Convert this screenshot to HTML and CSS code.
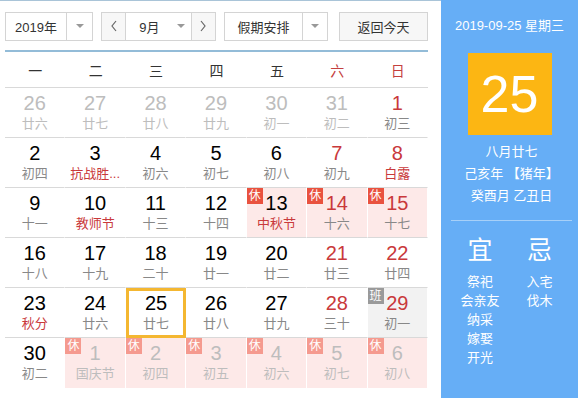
FILE: index.html
```html
<!DOCTYPE html>
<html lang="zh-CN">
<head>
    <meta charset="UTF-8">
    <title>万年历</title>
    <link rel="stylesheet" href="styles.css">
</head>
<body>
    <div class="calendar">
        <div class="main">
            <div class="toolbar">
                <div class="select year">
                    <span class="val">2019年</span>
                    <span class="arrow"></span>
                </div>
                <div class="month-group">
                    <button class="nav"><svg width="8" height="12" viewBox="0 0 8 12"><polyline points="6,1 2,6 6,11" fill="none" stroke="#666" stroke-width="1.2"/></svg></button>
                    <div class="month">
                        <span class="val">9月</span>
                        <span class="arrow"></span>
                    </div>
                    <button class="nav"><svg width="8" height="12" viewBox="0 0 8 12"><polyline points="2,1 6,6 2,11" fill="none" stroke="#666" stroke-width="1.2"/></svg></button>
                </div>
                <div class="select holiday">
                    <span class="val">假期安排</span>
                    <span class="arrow"></span>
                </div>
                <button class="today-btn">返回今天</button>
            </div>

            <div class="weekdays">
                <span>一</span><span>二</span><span>三</span><span>四</span><span>五</span>
                <span class="weekend">六</span><span class="weekend">日</span>
            </div>

            <div class="days">
                <!-- row 1 -->
                <div class="day other"><b>26</b><i>廿六</i></div>
                <div class="day other"><b>27</b><i>廿七</i></div>
                <div class="day other"><b>28</b><i>廿八</i></div>
                <div class="day other"><b>29</b><i>廿九</i></div>
                <div class="day other"><b>30</b><i>初一</i></div>
                <div class="day other"><b>31</b><i>初二</i></div>
                <div class="day red"><b>1</b><i>初三</i></div>
                <!-- row 2 -->
                <div class="day"><b>2</b><i>初四</i></div>
                <div class="day"><b>3</b><i class="fest">抗战胜...</i></div>
                <div class="day"><b>4</b><i>初六</i></div>
                <div class="day"><b>5</b><i>初七</i></div>
                <div class="day"><b>6</b><i>初八</i></div>
                <div class="day red"><b>7</b><i>初九</i></div>
                <div class="day red"><b>8</b><i class="fest">白露</i></div>
                <!-- row 3 -->
                <div class="day"><b>9</b><i>十一</i></div>
                <div class="day"><b>10</b><i class="fest">教师节</i></div>
                <div class="day"><b>11</b><i>十三</i></div>
                <div class="day"><b>12</b><i>十四</i></div>
                <div class="day rest"><em class="tag">休</em><b>13</b><i class="fest">中秋节</i></div>
                <div class="day rest red"><em class="tag">休</em><b>14</b><i>十六</i></div>
                <div class="day rest red"><em class="tag">休</em><b>15</b><i>十七</i></div>
                <!-- row 4 -->
                <div class="day"><b>16</b><i>十八</i></div>
                <div class="day"><b>17</b><i>十九</i></div>
                <div class="day"><b>18</b><i>二十</i></div>
                <div class="day"><b>19</b><i>廿一</i></div>
                <div class="day"><b>20</b><i>廿二</i></div>
                <div class="day red"><b>21</b><i>廿三</i></div>
                <div class="day red"><b>22</b><i>廿四</i></div>
                <!-- row 5 -->
                <div class="day"><b>23</b><i class="fest">秋分</i></div>
                <div class="day"><b>24</b><i>廿六</i></div>
                <div class="day today"><b>25</b><i>廿七</i></div>
                <div class="day"><b>26</b><i>廿八</i></div>
                <div class="day"><b>27</b><i>廿九</i></div>
                <div class="day red"><b>28</b><i>三十</i></div>
                <div class="day work red"><em class="tag">班</em><b>29</b><i>初一</i></div>
                <!-- row 6 -->
                <div class="day"><b>30</b><i>初二</i></div>
                <div class="day rest other"><em class="tag">休</em><b>1</b><i>国庆节</i></div>
                <div class="day rest other"><em class="tag">休</em><b>2</b><i>初四</i></div>
                <div class="day rest other"><em class="tag">休</em><b>3</b><i>初五</i></div>
                <div class="day rest other"><em class="tag">休</em><b>4</b><i>初六</i></div>
                <div class="day rest other"><em class="tag">休</em><b>5</b><i>初七</i></div>
                <div class="day rest other"><em class="tag">休</em><b>6</b><i>初八</i></div>
            </div>
        </div>

        <div class="panel">
            <div class="panel-date">2019-09-25 星期三</div>
            <div class="big-day">25</div>
            <div class="lunar">
                <p>八月廿七</p>
                <p>己亥年 【猪年】</p>
                <p>癸酉月 乙丑日</p>
            </div>
            <div class="almanac">
                <div class="col">
                    <h3>宜</h3>
                    <p>祭祀</p>
                    <p>会亲友</p>
                    <p>纳采</p>
                    <p>嫁娶</p>
                    <p>开光</p>
                </div>
                <div class="col">
                    <h3>忌</h3>
                    <p>入宅</p>
                    <p>伐木</p>
                </div>
            </div>
        </div>
    </div>
</body>
</html>
```

FILE: styles.css
```css
body {
    margin: 0;
    font-family: "Liberation Sans", "Noto Sans CJK SC", sans-serif;
    background-color: #fff;
    color: #333;
}
.calendar {
    display: flex;
    width: 578px;
    height: 398px;
    overflow: hidden;
}
.main {
    width: 441px;
    border-top: 1px solid #a9c4d8;
    box-sizing: border-box;
    padding: 0 13px 0 5px;
}

/* toolbar */
.toolbar {
    display: flex;
    align-items: center;
    height: 51px;
    padding-top: 1px;
    box-sizing: border-box;
    border-bottom: 2px solid #93bcd8;
}
.select, .month-group {
    display: flex;
    height: 29px;
    border: 1px solid #d4d4d4;
    box-sizing: border-box;
    background-color: #fff;
    font-size: 13px;
}
.select .val, .month .val {
    display: flex;
    align-items: center;
    justify-content: center;
}
.arrow {
    display: flex;
    align-items: center;
    justify-content: center;
}
.arrow::after {
    content: "";
    border-left: 4px solid transparent;
    border-right: 4px solid transparent;
    border-top: 4px solid #999;
}
.year {
    width: 88px;
}
.year .val {
    width: 60px;
    border-right: 1px solid #d4d4d4;
}
.year .arrow {
    flex: 1;
}
.month-group {
    width: 115px;
    margin-left: 8px;
}
.nav {
    width: 24px;
    padding: 0;
    border: none;
    background-color: #f7f7f7;
    display: flex;
    align-items: center;
    justify-content: center;
}
.month {
    display: flex;
    width: 66px;
    border-left: 1px solid #d4d4d4;
    border-right: 1px solid #d4d4d4;
}
.month .val {
    width: 42px;
    padding-left: 2px;
}
.month .arrow {
    flex: 1;
}
.holiday {
    width: 104px;
    margin-left: 8px;
}
.holiday .val {
    width: 77px;
    border-right: 1px solid #d4d4d4;
}
.holiday .arrow {
    flex: 1;
}
.today-btn {
    width: 89px;
    height: 29px;
    margin-left: 11px;
    border: 1px solid #d4d4d4;
    background-color: #f7f7f7;
    font-family: inherit;
    font-size: 13px;
    color: #333;
}

/* week header */
.weekdays {
    display: grid;
    grid-template-columns: repeat(7, 1fr);
    height: 35px;
    align-items: center;
    border-bottom: 1px solid #d9d9d9;
    font-size: 14px;
    color: #333;
}
.weekdays span {
    text-align: center;
}
.weekdays .weekend {
    color: #c4403e;
}

/* days */
.days {
    display: grid;
    grid-template-columns: repeat(7, 1fr);
    grid-auto-rows: 50px;
}
.day {
    position: relative;
    display: flex;
    flex-direction: column;
    align-items: center;
    border-bottom: 1px solid #d9d9d9;
    border-right: 1px solid #fff;
    box-sizing: border-box;
    padding-top: 4px;
}
.days .day:nth-last-child(-n+7) {
    border-bottom: none;
}
.day b {
    font-weight: normal;
    font-size: 20px;
    line-height: 23px;
    color: #000;
}
.day i {
    font-style: normal;
    font-size: 13px;
    line-height: 18px;
    color: #888;
    white-space: nowrap;
}
.day i.fest {
    color: #c9393b;
}
.day.red b {
    color: #c9393b;
}
.day.other b, .day.other i {
    color: #bdbdbd;
}
.day.rest {
    background-color: #fde9e8;
}
.day.work {
    background-color: #f2f2f2;
}
.tag {
    position: absolute;
    left: 0;
    top: 0;
    width: 16px;
    height: 16px;
    line-height: 16px;
    font-size: 12px;
    font-style: normal;
    text-align: center;
    color: #fff;
    background-color: #e9523f;
}
.day.other .tag {
    background-color: #f59a8f;
}
.day.work .tag {
    background-color: #9a9a9a;
}
.day.today {
    border: 3px solid #f4b731;
    padding-top: 1px;
}

/* right panel */
.panel {
    flex: 1;
    background-color: #66aef6;
    color: #fff;
    text-align: center;
    padding-top: 16px;
}
.panel-date {
    font-size: 13px;
    line-height: 20px;
}
.big-day {
    width: 84px;
    height: 82px;
    margin: 17px auto 0;
    background-color: #fcb613;
    font-size: 52px;
    line-height: 82px;
}
.lunar {
    margin-top: 6px;
    padding-bottom: 13px;
    margin-left: 10px;
    margin-right: 6px;
    border-bottom: 1px solid #a7d0f8;
}
.lunar p {
    margin: 0;
    font-size: 13px;
    line-height: 22px;
}
.almanac {
    display: flex;
    justify-content: space-around;
    padding: 0 12px 0 6px;
}
.col h3 {
    margin: 14px 0 7px;
    font-size: 25px;
    font-weight: normal;
    line-height: 30px;
}
.col p {
    margin: 0;
    font-size: 13px;
    line-height: 19px;
}
```
